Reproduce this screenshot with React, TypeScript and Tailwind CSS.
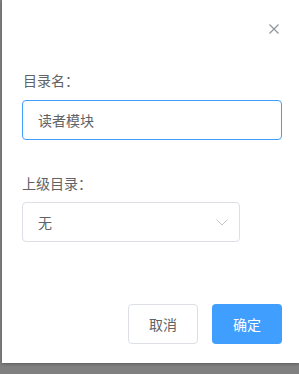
import { useState } from 'react'

const font = { fontFamily: '"Noto Sans CJK SC", "Noto Sans", sans-serif' }

export default function App() {
  const [name, setName] = useState('读者模块')

  return (
    <div className="h-[374px] w-full bg-[#808080] pl-[2px] overflow-hidden" style={font}>
      <div className="relative h-[363px] w-[297px] bg-white shadow-[0_1px_3px_rgba(0,0,0,0.3)] flex flex-col">
        {/* Header with close */}
        <div className="flex justify-end pt-[24px] pr-[20px]">
          <button className="w-[10px] h-[10px] flex items-center justify-center">
            <svg width="10" height="10" viewBox="0 0 10 10">
              <path d="M0.5 0.5 L9.5 9.5 M9.5 0.5 L0.5 9.5" stroke="#909399" strokeWidth="1.2" fill="none" />
            </svg>
          </button>
        </div>

        {/* Body */}
        <div className="flex flex-col pl-[20px]">
          <label className="mt-[36px] text-[14px] leading-[20px] text-[#606266] pl-[1px]">目录名：</label>
          <input
            value={name}
            onChange={(e) => setName(e.target.value)}
            className="mt-[10px] w-[260px] h-[40px] rounded-[4px] border border-[#409eff] px-[15px] text-[14px] text-[#606266] outline-none"
            style={font}
          />

          <label className="mt-[33px] text-[14px] leading-[20px] text-[#606266]">上级目录：</label>
          <div className="mt-[9px] w-[218px] h-[40px] rounded-[4px] border border-[#dcdfe6] pl-[15px] pr-[11px] flex items-center justify-between">
            <span className="text-[14px] text-[#606266]">无</span>
            <svg width="12" height="7" viewBox="0 0 12 7">
              <path d="M0.5 0.5 L6 6 L11.5 0.5" stroke="#c0c4cc" strokeWidth="1" fill="none" />
            </svg>
          </div>
        </div>

        {/* Footer */}
        <div className="mt-[62px] flex justify-end gap-[14px] pr-[17px]">
          <button className="w-[70px] h-[40px] rounded-[4px] border border-[#dcdfe6] bg-white text-[14px] text-[#606266]">
            取消
          </button>
          <button className="w-[70px] h-[40px] rounded-[4px] bg-[#409eff] text-[14px] text-white">
            确定
          </button>
        </div>
      </div>
    </div>
  )
}
